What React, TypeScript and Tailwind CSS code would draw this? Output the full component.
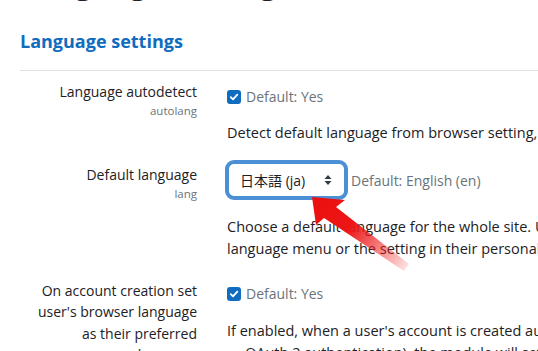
import React from "react";

const font = { fontFamily: '"Open Sans", "Noto Sans CJK JP", sans-serif' };

function Check() {
  return (
    <span className="inline-flex w-[14px] h-[14px] rounded-[3px] bg-[#0f6cbf] items-center justify-center mr-[5px]">
      <svg width="10" height="10" viewBox="0 0 10 10">
        <path d="M1.8 5.2 L4 7.4 L8.3 2.6" fill="none" stroke="#fff" strokeWidth="1.8" strokeLinecap="round" strokeLinejoin="round" />
      </svg>
    </span>
  );
}

function Label({ title, name }: { title: string[]; name?: string }) {
  return (
    <div className="w-[197px] shrink-0 text-right">
      {title.map((t) => (
        <div key={t} className="text-[14px] leading-[21.3px] text-[#1d2125] whitespace-nowrap">
          {t}
        </div>
      ))}
      {name && <div className="text-[11.5px] leading-[18px] text-[#6a737b]">{name}</div>}
    </div>
  );
}

export default function App() {
  return (
    <div className="relative w-[538px] h-[351px] overflow-hidden bg-white" style={font}>
      {/* page title, mostly scrolled away */}
      <div className="h-[6px] overflow-hidden">
        <div className="mt-[-36px] pl-[20px] text-[30px] leading-[38px] font-bold text-[#1d2125] whitespace-nowrap">
          Language settings
        </div>
      </div>

      <h3 className="mt-[23px] pl-[20px] text-[18px] leading-[24px] font-bold text-[#0f6cbf]">Language settings</h3>
      <div className="mt-[17px] ml-[20px] h-px bg-[#dee2e6]" />

      {/* autolang */}
      <div className="flex">
        <div className="pt-[10px]">
          <Label title={["Language autodetect"]} name="autolang" />
        </div>
        <div className="ml-[30px] pt-[15px] text-[14px] leading-[21px] whitespace-nowrap">
          <div className="flex items-center text-[#6a737b]">
            <Check />
            Default: Yes
          </div>
          <div className="mt-[15px] text-[14.5px] leading-[22px] text-[#1d2125]">
            Detect default language from browser setting, if disabled site default is used
          </div>
        </div>
      </div>

      {/* lang */}
      <div className="flex">
        <div className="pt-[20px]">
          <Label title={["Default language"]} name="lang" />
        </div>
        <div className="ml-[28px] pt-[16px] text-[14px] leading-[21px] whitespace-nowrap">
          <div className="flex items-center">
            <div className="w-[123px] h-[40px] rounded-[9px] border-[4px] border-[#4b8fd4] bg-white flex items-center justify-between pl-[11px] pr-[12px] text-[#1d2125]">
              <span className="text-[14px]">日本語 (ja)</span>
              <svg width="8" height="12" viewBox="0 0 8 12">
                <path d="M4 1 L7.5 5 H0.5 Z M4 11 L7.5 7 H0.5 Z" fill="#343a40" />
              </svg>
            </div>
            <span className="ml-[3px] text-[#6a737b]">Default: English (en)</span>
          </div>
          <div className="mt-[16px] ml-[2px] text-[14.5px] leading-[22px] text-[#1d2125]">
            <div>Choose a default language for the whole site. Users can override this using the</div>
            <div>language menu or the setting in their personal profile.</div>
          </div>
        </div>
      </div>

      {/* autolangusercreation */}
      <div className="flex">
        <div className="pt-[20px]">
          <Label title={["On account creation set", "user's browser language", "as their preferred", "language"]} />
        </div>
        <div className="ml-[30px] pt-[23px] text-[14px] leading-[21px] whitespace-nowrap">
          <div className="flex items-center text-[#6a737b]">
            <Check />
            Default: Yes
          </div>
          <div className="mt-[16px] text-[14.5px] leading-[22px] text-[#1d2125]">
            <div>If enabled, when a user's account is created automatically by an authentication</div>
            <div className="pl-[18px]">OAuth 2 authentication), the module will set the language</div>
          </div>
        </div>
      </div>

      {/* red annotation arrow */}
      <svg className="absolute left-0 top-0 pointer-events-none" width="538" height="351">
        <defs>
          <linearGradient id="arr" x1="312" y1="198" x2="408" y2="268" gradientUnits="userSpaceOnUse">
            <stop offset="0" stopColor="#ec1010" />
            <stop offset="0.4" stopColor="#ec1515" />
            <stop offset="1" stopColor="#ee2020" stopOpacity="0.12" />
          </linearGradient>
        </defs>
        <path d="M312 197 L345 200 L336 207 L409 264 L404 271 L324 218 L316 225 Z" fill="url(#arr)" />
      </svg>
    </div>
  );
}
